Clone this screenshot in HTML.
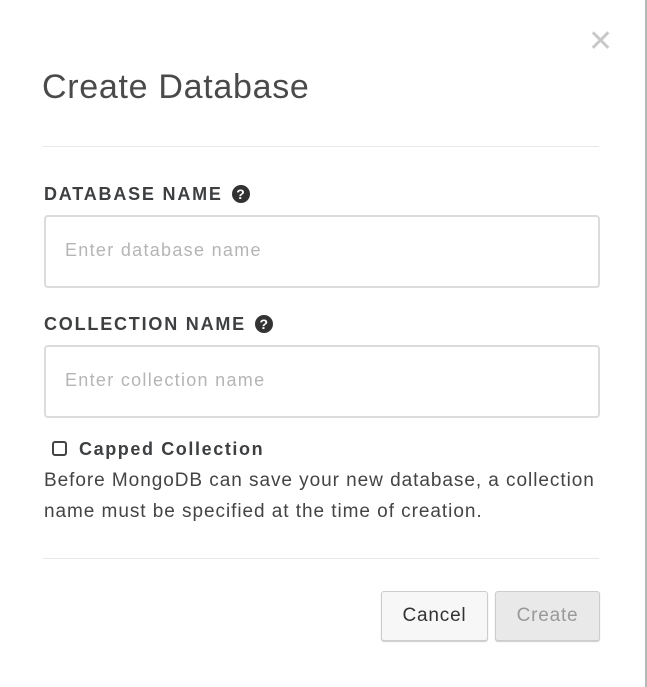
<!DOCTYPE html>
<html><head><style>
body{margin:0;width:647px;height:687px;background:#fff;font-family:"Liberation Sans",sans-serif;position:relative;overflow:hidden;color:#494747}
.a{position:absolute}
.lbl{font-weight:bold;font-size:18px;color:#3d3f41;letter-spacing:1.8px}
.q{display:inline-block;width:18px;height:18px;border-radius:50%;background:#333;color:#fff;font-size:14px;text-align:center;line-height:18px;vertical-align:1px;margin-left:2px;letter-spacing:0}
.inp{border:2px solid #dcdcdc;border-radius:4px;box-sizing:border-box;left:44px;width:556px;height:73px}
.ph{position:absolute;left:19px;top:23px;font-size:18px;color:#b5b5b5;letter-spacing:1.3px}
.btn{box-sizing:border-box;border:1px solid #ccc;border-radius:3px;height:50px;top:591px;font-size:19px;letter-spacing:0.8px;text-align:center;line-height:48px;box-shadow:0 1px 1px #ccc}
</style></head><body>
<div class="a" style="left:645px;top:0;width:2px;height:687px;background:#b8b8b8"></div>
<div class="a" style="left:588px;top:24px;font-size:30px;color:#c8c8c8;font-weight:300">&#x2715;</div>
<div class="a" style="left:42px;top:68px;font-size:34px;color:#4a4a4a;letter-spacing:0.7px">Create Database</div>
<div class="a" style="left:43px;top:146px;width:556px;height:1px;background:#e8e8e8"></div>
<div class="a lbl" style="left:44px;top:184px">DATABASE NAME <span class="q">?</span></div>
<div class="a inp" style="top:215px"><span class="ph">Enter database name</span></div>
<div class="a lbl" style="left:44px;top:314px">COLLECTION NAME <span class="q">?</span></div>
<div class="a inp" style="top:345px"><span class="ph">Enter collection name</span></div>
<div class="a" style="left:52px;top:441px;width:15px;height:15px;border:2px solid #444;border-radius:3px;box-sizing:border-box"></div>
<div class="a lbl" style="left:79px;top:439px;letter-spacing:1.6px">Capped Collection</div>
<div class="a" style="left:44px;top:465px;font-size:19px;letter-spacing:0.95px;line-height:31px;color:#444;width:600px">Before MongoDB can save your new database, a collection<br>name must be specified at the time of creation.</div>
<div class="a" style="left:43px;top:558px;width:556px;height:1px;background:#e8e8e8"></div>
<div class="a btn" style="left:381px;width:107px;background:#f7f7f7;color:#333">Cancel</div>
<div class="a btn" style="left:495px;width:105px;background:#e9e9e9;color:#999">Create</div>
</body></html>
